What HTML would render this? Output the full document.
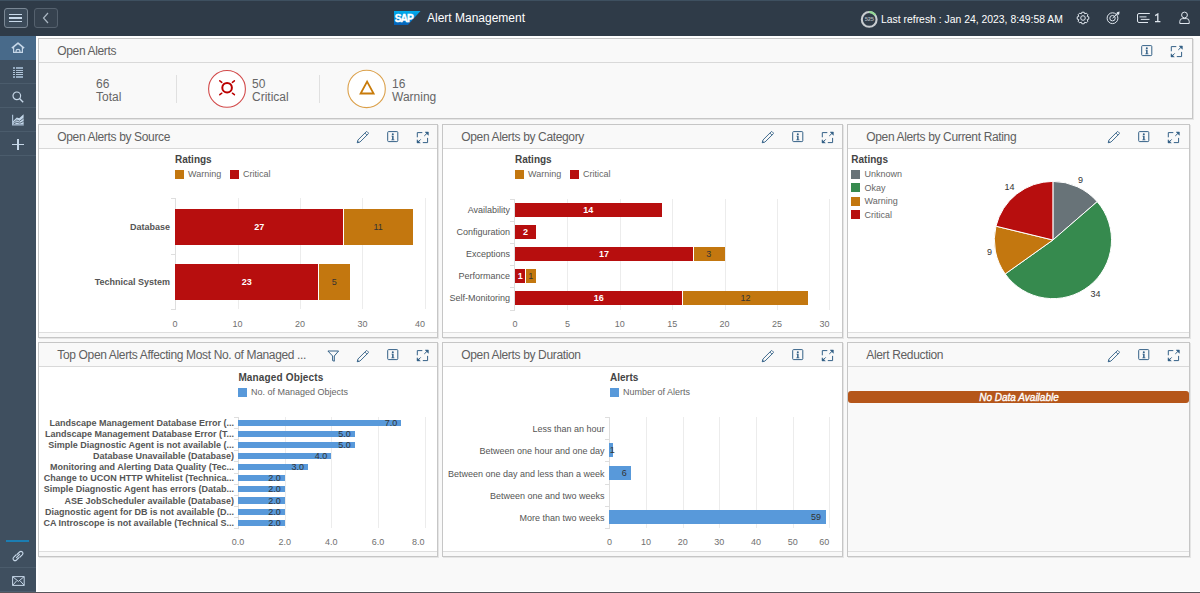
<!DOCTYPE html><html><head><meta charset="utf-8"><style>
*{box-sizing:border-box;margin:0;padding:0}
html,body{width:1200px;height:593px;overflow:hidden;background:#f9f9f9;font-family:"Liberation Sans",sans-serif;color:#333}
div,span,svg{position:absolute}
.t{white-space:nowrap;line-height:1}
.card{background:#fff;border:1px solid #c6c6c6;box-shadow:1px 1px 0 rgba(0,0,0,0.08)}
.ch{left:0;top:0;right:0;height:24px;background:#f9f9f9;border-bottom:1px solid #d9d9d9}
.tt{font-size:12px;letter-spacing:-0.35px;color:#606060}
.cf{left:0;right:0;bottom:0;height:5px;background:#f9f9f9;border-top:1px solid #dedede}
.s9{font-size:9px;color:#555}
.ax{font-size:9px;color:#707070}
.b{font-weight:700}
.grid{width:1px;background:#e9e9e9}
</style></head><body>
<div style="left:0;top:0;width:1200px;height:36px;background:#2f3b48;border-top:1px solid #3e5060"></div>
<div style="left:4px;top:8px;width:24px;height:20px;border:1px solid #7a8794;border-radius:3px;background:#3c4b5a"></div>
<div style="left:9.3px;top:13.6px;width:12.9px;height:1.4px;background:#c8d9ea;"></div>
<div style="left:9.3px;top:17.2px;width:12.9px;height:1.4px;background:#c8d9ea;"></div>
<div style="left:9.3px;top:21.1px;width:12.9px;height:1.4px;background:#c8d9ea;"></div>
<div style="left:34px;top:8px;width:24px;height:20px;border:1px solid #55616e;border-radius:3px;background:#36424f"></div>
<svg style="left:41px;top:12px" width="10" height="12" viewBox="0 0 10 12"><path d="M7 1 L2.5 6 L7 11" fill="none" stroke="#aab6c2" stroke-width="1.2"/></svg>
<svg style="left:394px;top:11px" width="27" height="14" viewBox="0 0 27 14"><defs><linearGradient id="g" x1="0" y1="0" x2="0" y2="1"><stop offset="0" stop-color="#00aeef"/><stop offset="1" stop-color="#0560b8"/></linearGradient></defs><path d="M0 0 H26.5 L13.9 14 H0 Z" fill="url(#g)"/><text x="0.7" y="11" font-family="Liberation Sans" font-weight="700" font-size="10.2" fill="#fff" stroke="#fff" stroke-width="0.45" letter-spacing="-0.9">SAP</text></svg>
<span class="t " style="left:427px;top:12px;font-size:12px;color:#fff">Alert Management</span>
<svg style="left:860px;top:10px" width="18" height="19" viewBox="0 0 18 19"><circle cx="9.2" cy="9.4" r="7.4" fill="none" stroke="#c8ccd0" stroke-width="2.1"/><path d="M9.2 2 A7.4 7.4 0 0 1 15.26 5.16" fill="none" stroke="#93d893" stroke-width="2.1"/><text x="9.2" y="11.4" text-anchor="middle" font-family="Liberation Sans" font-weight="700" font-size="5.6" fill="#aab0b6" letter-spacing="-0.2">525</text></svg>
<span class="t " style="left:881px;top:15px;font-size:10.4px;color:#fff">Last refresh : Jan 24, 2023, 8:49:58 AM</span>
<svg style="left:1076px;top:10.8px" width="14" height="14" viewBox="0 0 14 14"><path d="M11.16 5.29 L12.78 5.83 L12.78 8.17 L11.16 8.71 L11.15 8.73 L11.92 10.26 L10.26 11.92 L8.73 11.15 L8.71 11.16 L8.17 12.78 L5.83 12.78 L5.29 11.16 L5.27 11.15 L3.74 11.92 L2.08 10.26 L2.85 8.73 L2.84 8.71 L1.22 8.17 L1.22 5.83 L2.84 5.29 L2.85 5.27 L2.08 3.74 L3.74 2.08 L5.27 2.85 L5.29 2.84 L5.83 1.22 L8.17 1.22 L8.71 2.84 L8.73 2.85 L10.26 2.08 L11.92 3.74 L11.15 5.27 Z" fill="none" stroke="#dfe6ee" stroke-width="1" stroke-linejoin="round"/><circle cx="7" cy="7" r="2.3" fill="none" stroke="#dfe6ee" stroke-width="1"/></svg>
<svg style="left:1106px;top:11px" width="15" height="14" viewBox="0 0 15 14"><circle cx="6.5" cy="7.2" r="5.4" fill="none" stroke="#dfe6ee" stroke-width="1"/><circle cx="6.5" cy="7.2" r="2.7" fill="none" stroke="#dfe6ee" stroke-width="1"/><path d="M6.5 7.2 L12.6 1.6" stroke="#dfe6ee" stroke-width="1"/><path d="M11 1.2 L13.6 0.6 L13.2 3.2 L12 4 L10.4 2.6 Z" fill="#dfe6ee"/></svg>
<svg style="left:1136px;top:12px" width="15" height="12" viewBox="0 0 15 12"><path d="M13.8 1.5 H3 Q1.5 1.5 1.5 3 V9 Q1.5 10.5 3 10.5 H12" fill="none" stroke="#dfe6ee" stroke-width="1"/><path d="M3.5 4.9 H10.5 M4.8 7.4 H13.5" stroke="#dfe6ee" stroke-width="1"/></svg>
<svg style="left:1154px;top:13px" width="8" height="10" viewBox="0 0 8 10"><path d="M1.2 2.6 L3.8 1 V8.6 M1 8.6 H6.4" fill="none" stroke="#dfe6ee" stroke-width="1.3"/></svg>
<svg style="left:1179px;top:11px" width="11" height="14" viewBox="0 0 11 14"><circle cx="5.5" cy="4" r="2.9" fill="none" stroke="#dfe6ee" stroke-width="1"/><path d="M0.8 12.5 V10.3 Q0.8 7.6 3.5 7.6 H7.5 Q10.2 7.6 10.2 10.3 V12.5 Z" fill="none" stroke="#dfe6ee" stroke-width="1"/></svg>
<div style="left:0px;top:36px;width:36px;height:557px;background:#3f4f5f;"></div>
<div style="left:0px;top:36px;width:36px;height:24px;background:#486a8a;"></div>
<div style="left:36px;top:36px;width:1164px;height:2px;background:#fff;"></div>
<div style="left:36px;top:36px;width:2px;height:556px;background:#fff;"></div>
<div style="left:0px;top:83px;width:36px;height:1px;background:#4b5c6c;"></div>
<div style="left:0px;top:107px;width:36px;height:1px;background:#4b5c6c;"></div>
<div style="left:0px;top:131px;width:36px;height:1px;background:#4b5c6c;"></div>
<div style="left:0px;top:155px;width:36px;height:1px;background:#4b5c6c;"></div>
<svg style="left:11px;top:42px" width="14" height="12" viewBox="0 0 14 12"><path d="M0.9 6.2 L7 1.1 L13.1 6.2" fill="none" stroke="#c6d7e8" stroke-width="1.6" stroke-linejoin="round"/><path d="M2.6 5 V10.4 H11.4 V5 M5.1 10.4 V8.7 Q5.1 7.4 7 7.4 Q8.9 7.4 8.9 8.7 V10.4" fill="none" stroke="#c6d7e8" stroke-width="1.2"/></svg>
<div style="left:12.9px;top:67px;width:2.1px;height:1.5px;background:#93a9bf;"></div>
<div style="left:15.8px;top:67px;width:7px;height:1.5px;background:#93a9bf;"></div>
<div style="left:12.9px;top:69.6px;width:2.1px;height:1.3px;background:#a9bed3;"></div>
<div style="left:15.8px;top:69.6px;width:7px;height:1.3px;background:#a9bed3;"></div>
<div style="left:12.9px;top:71.9px;width:2.1px;height:1.3px;background:#b3c7db;"></div>
<div style="left:15.8px;top:71.9px;width:7px;height:1.3px;background:#b3c7db;"></div>
<div style="left:12.9px;top:74px;width:2.1px;height:1.3px;background:#b3c7db;"></div>
<div style="left:15.8px;top:74px;width:7px;height:1.3px;background:#b3c7db;"></div>
<div style="left:12.9px;top:76.1px;width:2.1px;height:1.6px;background:#93a9bf;"></div>
<div style="left:15.8px;top:76.1px;width:7px;height:1.6px;background:#93a9bf;"></div>
<svg style="left:12px;top:91px" width="12" height="12" viewBox="0 0 12 12"><circle cx="4.8" cy="4.8" r="3.8" fill="none" stroke="#c6d7e8" stroke-width="1.2"/><path d="M7.5 7.5 L11.2 11.2" stroke="#c6d7e8" stroke-width="1.4"/></svg>
<svg style="left:12px;top:114px" width="13" height="12" viewBox="0 0 13 12"><path d="M1 10.4 V7.2 L4.8 3.4 L7.2 4.2 L11.6 0.2 V10.4 Z" fill="#c3d7ea"/><path d="M1.6 8.6 L4.8 5.9 L7.6 7.2 L11.6 4.2 M1.6 10 L4.8 8.2 L8 9.2 L11.6 7.4" fill="none" stroke="#3f4f5f" stroke-width="0.8"/><path d="M0.6 0.8 V11 H11.8" fill="none" stroke="#a9bed3" stroke-width="1.2"/></svg>
<div style="left:12px;top:143.5px;width:12px;height:1.4px;background:#c6d7e8;"></div>
<div style="left:17.3px;top:138.5px;width:1.4px;height:11.5px;background:#c6d7e8;"></div>
<div style="left:6px;top:540.2px;width:23px;height:1.5px;background:#1b7db2;"></div>
<svg style="left:12px;top:550px" width="12" height="12" viewBox="0 0 12 12"><path d="M5 4.5 L7.5 2 Q9 0.6 10.4 2 Q11.6 3.3 10.2 4.8 L7.5 7.5 M7 7.5 L4.5 10 Q3 11.4 1.6 10 Q0.4 8.7 1.8 7.2 L4.5 4.5 M4.2 7.8 L7.8 4.2" fill="none" stroke="#c6d7e8" stroke-width="1.1"/></svg>
<div style="left:0px;top:567px;width:36px;height:1px;background:#4b5c6c;"></div>
<svg style="left:11.5px;top:576px" width="13" height="10" viewBox="0 0 13 10"><path d="M0.6 0.6 H12.2 V9.4 H0.6 Z M0.6 0.6 L6.4 5.4 L12.2 0.6 M0.6 9.4 L4.7 4.8 M12.2 9.4 L8.1 4.8" fill="none" stroke="#c6d7e8" stroke-width="1" stroke-linejoin="round"/></svg>
<div style="left:0px;top:591px;width:36px;height:1px;background:#4b5e70;"></div>
<div style="left:36px;top:591px;width:1164px;height:1px;background:#ffffff;"></div>
<div style="left:0px;top:592px;width:1200px;height:1px;background:#58545a;"></div>
<div class="card" style="left:38px;top:38px;width:1155px;height:81px;background:#f9f9f9">
<div class="ch"></div>
<span class="t tt" style="left:18.3px;top:5.6px;">Open Alerts</span>
<svg style="left:1102.3px;top:6.2px" width="12" height="12" viewBox="0 0 12 12"><rect x="0.7" y="0.6" width="10.1" height="10" rx="0.9" fill="none" stroke="#346187" stroke-width="1"/><circle cx="5.8" cy="3.2" r="1" fill="#346187"/><path d="M4.5 4.8 H6.6 V8.4 H7.4 V9.3 H4.3 V8.4 H5.1 V5.6 H4.5 Z" fill="#346187"/></svg>
<svg style="left:1130.5px;top:6.0px" width="14" height="14" viewBox="0 0 14 14"><path d="M1.3 6.3 V1.6 H6.3 M11.6 6.9 V11.6 H6.8 M8.3 4.9 L11.9 1.5 M4.7 8.4 L1.3 11.8" fill="none" stroke="#346187" stroke-width="1"/><path d="M9.2 1 H12.4 V4.3 Z M1 8.7 V11.9 H4.3 Z" fill="#346187" stroke="#346187" stroke-width="0.5" stroke-linejoin="round"/></svg>
</div>
<span class="t " style="left:96px;top:78px;font-size:12px;color:#666">66</span>
<span class="t " style="left:96px;top:91px;font-size:12px;color:#666">Total</span>
<div style="left:176px;top:75px;width:1px;height:28px;background:#e0e0e0;"></div>
<svg style="left:207px;top:69px" width="40" height="40" viewBox="0 0 40 40"><circle cx="20" cy="19.9" r="18.4" fill="#fff" stroke="#d24a4a" stroke-width="1.1"/><circle cx="20.1" cy="18.7" r="4.8" fill="none" stroke="#bb0000" stroke-width="2"/><path d="M12.8 11.8 L14.8 13.4 M27.4 11.8 L25.4 13.4 M12.8 25.7 L14.8 24.2 M27.4 25.7 L25.4 24.2" stroke="#bb0000" stroke-width="1.5" stroke-linecap="round"/></svg>
<span class="t " style="left:252px;top:78px;font-size:12px;color:#666">50</span>
<span class="t " style="left:252px;top:91px;font-size:12px;color:#666">Critical</span>
<div style="left:319px;top:75px;width:1px;height:28px;background:#e0e0e0;"></div>
<svg style="left:346px;top:69px" width="41" height="40" viewBox="0 0 41 40"><circle cx="20.6" cy="19.9" r="18.7" fill="#fff" stroke="#dba04a" stroke-width="1.1"/><path d="M21.1 12.6 L27.6 24.5 H14.6 Z" fill="none" stroke="#c87b0a" stroke-width="1.8" stroke-linejoin="miter"/></svg>
<span class="t " style="left:392px;top:78px;font-size:12px;color:#666">16</span>
<span class="t " style="left:392px;top:91px;font-size:12px;color:#666">Warning</span>
<div class="card" style="left:38px;top:124px;width:400px;height:214px;background:#fff">
<div class="ch"></div>
<span class="t tt" style="left:18.3px;top:5.6px;">Open Alerts by Source</span>
<svg style="left:316.7px;top:6.0px" width="13" height="13" viewBox="0 0 14 14"><path d="M1.3 12.7 L2.1 9.7 L11.1 0.7 Q11.5 0.4 11.9 0.7 L13.3 2.1 Q13.6 2.5 13.3 2.9 L4.3 11.9 Z" fill="none" stroke="#346187" stroke-width="1"/><path d="M9.6 2.2 L11.8 4.4" stroke="#346187" stroke-width="0.9"/><path d="M1.3 12.7 L1.8 10.6 L3.4 12.2 Z" fill="#346187"/></svg>
<svg style="left:347.8px;top:5.8px" width="12" height="12" viewBox="0 0 12 12"><rect x="0.7" y="0.6" width="10.1" height="10" rx="0.9" fill="none" stroke="#346187" stroke-width="1"/><circle cx="5.8" cy="3.2" r="1" fill="#346187"/><path d="M4.5 4.8 H6.6 V8.4 H7.4 V9.3 H4.3 V8.4 H5.1 V5.6 H4.5 Z" fill="#346187"/></svg>
<svg style="left:376.5px;top:5.6px" width="14" height="14" viewBox="0 0 14 14"><path d="M1.3 6.3 V1.6 H6.3 M11.6 6.9 V11.6 H6.8 M8.3 4.9 L11.9 1.5 M4.7 8.4 L1.3 11.8" fill="none" stroke="#346187" stroke-width="1"/><path d="M9.2 1 H12.4 V4.3 Z M1 8.7 V11.9 H4.3 Z" fill="#346187" stroke="#346187" stroke-width="0.5" stroke-linejoin="round"/></svg>
<div class="cf"></div>
</div>
<span class="t b" style="left:175px;top:154.5px;font-size:10px;color:#444">Ratings</span>
<div style="left:175px;top:170px;width:9px;height:9px;background:#c3770f;"></div>
<span class="t s9" style="left:188px;top:170px;color:#666">Warning</span>
<div style="left:230px;top:170px;width:9px;height:9px;background:#b70e0e;"></div>
<span class="t s9" style="left:243px;top:170px;color:#666">Critical</span>
<div style="left:238px;top:198px;width:1px;height:111px;background:#ececec;"></div>
<div style="left:300px;top:198px;width:1px;height:111px;background:#ececec;"></div>
<div style="left:362px;top:198px;width:1px;height:111px;background:#ececec;"></div>
<div style="left:425px;top:198px;width:1px;height:111px;background:#ececec;"></div>
<div style="left:175px;top:198px;width:1px;height:112px;background:#dedede;"></div>
<div style="left:171px;top:198px;width:4px;height:1px;background:#dedede;"></div>
<div style="left:171px;top:254px;width:4px;height:1px;background:#dedede;"></div>
<div style="left:171px;top:309px;width:4px;height:1px;background:#dedede;"></div>
<div style="left:175px;top:208.5px;width:168.75px;height:36px;background:#b70e0e;"></div>
<div style="left:343.75px;top:208.5px;width:68.75px;height:36px;background:#c3770f;"></div>
<div style="left:343.25px;top:208.5px;width:1px;height:36px;background:#fff;"></div>
<div style="left:175px;top:264.2px;width:143.75px;height:36px;background:#b70e0e;"></div>
<div style="left:318.75px;top:264.2px;width:31.25px;height:36px;background:#c3770f;"></div>
<div style="left:318.25px;top:264.2px;width:1px;height:36px;background:#fff;"></div>
<span class="t" style="left:209.375px;top:220.5px;width:100px;height:12px;text-align:center;line-height:12px;font-size:9px;font-weight:700;color:#fff">27</span>
<span class="t" style="left:328.125px;top:220.5px;width:100px;height:12px;text-align:center;line-height:12px;font-size:9px;color:#333">11</span>
<span class="t" style="left:196.875px;top:276.2px;width:100px;height:12px;text-align:center;line-height:12px;font-size:9px;font-weight:700;color:#fff">23</span>
<span class="t" style="left:284.375px;top:276.2px;width:100px;height:12px;text-align:center;line-height:12px;font-size:9px;color:#333">5</span>
<span class="t" style="left:-130px;top:220.5px;width:300px;height:12px;text-align:right;line-height:12px;font-size:9px;font-weight:700;color:#555">Database</span>
<span class="t" style="left:-130px;top:276.2px;width:300px;height:12px;text-align:right;line-height:12px;font-size:9px;font-weight:700;color:#555">Technical System</span>
<span class="t" style="left:125.0px;top:317.5px;width:100px;height:12px;text-align:center;line-height:12px;font-size:9px;color:#707070">0</span>
<span class="t" style="left:187.5px;top:317.5px;width:100px;height:12px;text-align:center;line-height:12px;font-size:9px;color:#707070">10</span>
<span class="t" style="left:250.0px;top:317.5px;width:100px;height:12px;text-align:center;line-height:12px;font-size:9px;color:#707070">20</span>
<span class="t" style="left:312.5px;top:317.5px;width:100px;height:12px;text-align:center;line-height:12px;font-size:9px;color:#707070">30</span>
<span class="t" style="left:125.0px;top:317.5px;width:300px;height:12px;text-align:right;line-height:12px;font-size:9px;color:#707070">40</span>
<div class="card" style="left:442px;top:124px;width:401px;height:214px;background:#fff">
<div class="ch"></div>
<span class="t tt" style="left:18.3px;top:5.6px;">Open Alerts by Category</span>
<svg style="left:317.7px;top:6.0px" width="13" height="13" viewBox="0 0 14 14"><path d="M1.3 12.7 L2.1 9.7 L11.1 0.7 Q11.5 0.4 11.9 0.7 L13.3 2.1 Q13.6 2.5 13.3 2.9 L4.3 11.9 Z" fill="none" stroke="#346187" stroke-width="1"/><path d="M9.6 2.2 L11.8 4.4" stroke="#346187" stroke-width="0.9"/><path d="M1.3 12.7 L1.8 10.6 L3.4 12.2 Z" fill="#346187"/></svg>
<svg style="left:348.8px;top:5.8px" width="12" height="12" viewBox="0 0 12 12"><rect x="0.7" y="0.6" width="10.1" height="10" rx="0.9" fill="none" stroke="#346187" stroke-width="1"/><circle cx="5.8" cy="3.2" r="1" fill="#346187"/><path d="M4.5 4.8 H6.6 V8.4 H7.4 V9.3 H4.3 V8.4 H5.1 V5.6 H4.5 Z" fill="#346187"/></svg>
<svg style="left:377.5px;top:5.6px" width="14" height="14" viewBox="0 0 14 14"><path d="M1.3 6.3 V1.6 H6.3 M11.6 6.9 V11.6 H6.8 M8.3 4.9 L11.9 1.5 M4.7 8.4 L1.3 11.8" fill="none" stroke="#346187" stroke-width="1"/><path d="M9.2 1 H12.4 V4.3 Z M1 8.7 V11.9 H4.3 Z" fill="#346187" stroke="#346187" stroke-width="0.5" stroke-linejoin="round"/></svg>
<div class="cf"></div>
</div>
<span class="t b" style="left:515px;top:154.5px;font-size:10px;color:#444">Ratings</span>
<div style="left:515px;top:170px;width:9px;height:9px;background:#c3770f;"></div>
<span class="t s9" style="left:528px;top:170px;color:#666">Warning</span>
<div style="left:570px;top:170px;width:9px;height:9px;background:#b70e0e;"></div>
<span class="t s9" style="left:583px;top:170px;color:#666">Critical</span>
<div style="left:567px;top:198.5px;width:1px;height:111.0px;background:#ececec;"></div>
<div style="left:620px;top:198.5px;width:1px;height:111.0px;background:#ececec;"></div>
<div style="left:672px;top:198.5px;width:1px;height:111.0px;background:#ececec;"></div>
<div style="left:725px;top:198.5px;width:1px;height:111.0px;background:#ececec;"></div>
<div style="left:777px;top:198.5px;width:1px;height:111.0px;background:#ececec;"></div>
<div style="left:829px;top:198.5px;width:1px;height:111.0px;background:#ececec;"></div>
<div style="left:514px;top:198.5px;width:1px;height:112.0px;background:#dedede;"></div>
<div style="left:510px;top:198.5px;width:4px;height:1px;background:#dedede;"></div>
<div style="left:510px;top:220.7px;width:4px;height:1px;background:#dedede;"></div>
<div style="left:510px;top:242.9px;width:4px;height:1px;background:#dedede;"></div>
<div style="left:510px;top:265.1px;width:4px;height:1px;background:#dedede;"></div>
<div style="left:510px;top:287.3px;width:4px;height:1px;background:#dedede;"></div>
<div style="left:510px;top:309.5px;width:4px;height:1px;background:#dedede;"></div>
<div style="left:515px;top:202.8px;width:146.72px;height:14px;background:#b70e0e;"></div>
<span class="t" style="left:538.36px;top:203.60000000000002px;width:100px;height:12px;text-align:center;line-height:12px;font-size:9px;font-weight:700;color:#fff">14</span>
<span class="t" style="left:210px;top:204.10000000000002px;width:300px;height:12px;text-align:right;line-height:12px;font-size:9px;color:#555">Availability</span>
<div style="left:515px;top:224.88px;width:20.96px;height:14px;background:#b70e0e;"></div>
<span class="t" style="left:475.48px;top:225.68px;width:100px;height:12px;text-align:center;line-height:12px;font-size:9px;font-weight:700;color:#fff">2</span>
<span class="t" style="left:210px;top:226.18px;width:300px;height:12px;text-align:right;line-height:12px;font-size:9px;color:#555">Configuration</span>
<div style="left:515px;top:246.96px;width:178.16px;height:14px;background:#b70e0e;"></div>
<div style="left:693.16px;top:246.96px;width:31.44px;height:14px;background:#c3770f;"></div>
<div style="left:692.66px;top:246.96px;width:1px;height:14px;background:#fff;"></div>
<span class="t" style="left:554.08px;top:247.76000000000002px;width:100px;height:12px;text-align:center;line-height:12px;font-size:9px;font-weight:700;color:#fff">17</span>
<span class="t" style="left:658.88px;top:247.76000000000002px;width:100px;height:12px;text-align:center;line-height:12px;font-size:9px;color:#333">3</span>
<span class="t" style="left:210px;top:248.26000000000002px;width:300px;height:12px;text-align:right;line-height:12px;font-size:9px;color:#555">Exceptions</span>
<div style="left:515px;top:269.04px;width:10.48px;height:14px;background:#b70e0e;"></div>
<div style="left:525.48px;top:269.04px;width:10.48px;height:14px;background:#c3770f;"></div>
<div style="left:524.98px;top:269.04px;width:1px;height:14px;background:#fff;"></div>
<span class="t" style="left:470.24px;top:269.84000000000003px;width:100px;height:12px;text-align:center;line-height:12px;font-size:9px;font-weight:700;color:#fff">1</span>
<span class="t" style="left:480.72px;top:269.84000000000003px;width:100px;height:12px;text-align:center;line-height:12px;font-size:9px;color:#333">1</span>
<span class="t" style="left:210px;top:270.34000000000003px;width:300px;height:12px;text-align:right;line-height:12px;font-size:9px;color:#555">Performance</span>
<div style="left:515px;top:291.12px;width:167.68px;height:14px;background:#b70e0e;"></div>
<div style="left:682.68px;top:291.12px;width:125.76px;height:14px;background:#c3770f;"></div>
<div style="left:682.18px;top:291.12px;width:1px;height:14px;background:#fff;"></div>
<span class="t" style="left:548.84px;top:291.92px;width:100px;height:12px;text-align:center;line-height:12px;font-size:9px;font-weight:700;color:#fff">16</span>
<span class="t" style="left:695.5600000000001px;top:291.92px;width:100px;height:12px;text-align:center;line-height:12px;font-size:9px;color:#333">12</span>
<span class="t" style="left:210px;top:292.42px;width:300px;height:12px;text-align:right;line-height:12px;font-size:9px;color:#555">Self-Monitoring</span>
<span class="t" style="left:465.0px;top:317.8px;width:100px;height:12px;text-align:center;line-height:12px;font-size:9px;color:#707070">0</span>
<span class="t" style="left:517.4px;top:317.8px;width:100px;height:12px;text-align:center;line-height:12px;font-size:9px;color:#707070">5</span>
<span class="t" style="left:569.8px;top:317.8px;width:100px;height:12px;text-align:center;line-height:12px;font-size:9px;color:#707070">10</span>
<span class="t" style="left:622.2px;top:317.8px;width:100px;height:12px;text-align:center;line-height:12px;font-size:9px;color:#707070">15</span>
<span class="t" style="left:674.6px;top:317.8px;width:100px;height:12px;text-align:center;line-height:12px;font-size:9px;color:#707070">20</span>
<span class="t" style="left:727.0px;top:317.8px;width:100px;height:12px;text-align:center;line-height:12px;font-size:9px;color:#707070">25</span>
<span class="t" style="left:529.4000000000001px;top:317.8px;width:300px;height:12px;text-align:right;line-height:12px;font-size:9px;color:#707070">30</span>
<div class="card" style="left:847px;top:124px;width:343px;height:214px;background:#fff">
<div class="ch"></div>
<span class="t tt" style="left:18.3px;top:5.6px;">Open Alerts by Current Rating</span>
<svg style="left:258.7px;top:6.0px" width="13" height="13" viewBox="0 0 14 14"><path d="M1.3 12.7 L2.1 9.7 L11.1 0.7 Q11.5 0.4 11.9 0.7 L13.3 2.1 Q13.6 2.5 13.3 2.9 L4.3 11.9 Z" fill="none" stroke="#346187" stroke-width="1"/><path d="M9.6 2.2 L11.8 4.4" stroke="#346187" stroke-width="0.9"/><path d="M1.3 12.7 L1.8 10.6 L3.4 12.2 Z" fill="#346187"/></svg>
<svg style="left:289.8px;top:5.8px" width="12" height="12" viewBox="0 0 12 12"><rect x="0.7" y="0.6" width="10.1" height="10" rx="0.9" fill="none" stroke="#346187" stroke-width="1"/><circle cx="5.8" cy="3.2" r="1" fill="#346187"/><path d="M4.5 4.8 H6.6 V8.4 H7.4 V9.3 H4.3 V8.4 H5.1 V5.6 H4.5 Z" fill="#346187"/></svg>
<svg style="left:318.5px;top:5.6px" width="14" height="14" viewBox="0 0 14 14"><path d="M1.3 6.3 V1.6 H6.3 M11.6 6.9 V11.6 H6.8 M8.3 4.9 L11.9 1.5 M4.7 8.4 L1.3 11.8" fill="none" stroke="#346187" stroke-width="1"/><path d="M9.2 1 H12.4 V4.3 Z M1 8.7 V11.9 H4.3 Z" fill="#346187" stroke="#346187" stroke-width="0.5" stroke-linejoin="round"/></svg>
<div class="cf"></div>
</div>
<span class="t b" style="left:851.3px;top:154.5px;font-size:10px;color:#444">Ratings</span>
<div style="left:851.2px;top:169.8px;width:9px;height:9px;background:#687378;"></div>
<span class="t s9" style="left:864.6px;top:170.0px;color:#666">Unknown</span>
<div style="left:851.2px;top:183.3px;width:9px;height:9px;background:#368a4e;"></div>
<span class="t s9" style="left:864.6px;top:183.5px;color:#666">Okay</span>
<div style="left:851.2px;top:196.8px;width:9px;height:9px;background:#c3770f;"></div>
<span class="t s9" style="left:864.6px;top:197.0px;color:#666">Warning</span>
<div style="left:851.2px;top:210.3px;width:9px;height:9px;background:#b70e0e;"></div>
<span class="t s9" style="left:864.6px;top:210.5px;color:#666">Critical</span>
<svg style="left:0;top:0" width="1200" height="593" viewBox="0 0 1200 593"><path d="M1052.9 240 L1052.90 181.40 A58.6 58.6 0 0 1 1097.19 201.63 Z" fill="#687378" stroke="#fff" stroke-width="1"/><path d="M1052.9 240 L1097.19 201.63 A58.6 58.6 0 1 1 1005.17 273.99 Z" fill="#368a4e" stroke="#fff" stroke-width="1"/><path d="M1052.9 240 L1005.17 273.99 A58.6 58.6 0 0 1 995.95 226.18 Z" fill="#c3770f" stroke="#fff" stroke-width="1"/><path d="M1052.9 240 L995.95 226.18 A58.6 58.6 0 0 1 1052.90 181.40 Z" fill="#b70e0e" stroke="#fff" stroke-width="1"/></svg>
<span class="t" style="left:1030.5px;top:173.5px;width:100px;height:12px;text-align:center;line-height:12px;font-size:9px;color:#333">9</span>
<span class="t" style="left:1045.5px;top:287.5px;width:100px;height:12px;text-align:center;line-height:12px;font-size:9px;color:#333">34</span>
<span class="t" style="left:939.5px;top:245.5px;width:100px;height:12px;text-align:center;line-height:12px;font-size:9px;color:#333">9</span>
<span class="t" style="left:959.5px;top:181px;width:100px;height:12px;text-align:center;line-height:12px;font-size:9px;color:#333">14</span>
<div class="card" style="left:38px;top:342px;width:400px;height:215px;background:#fff">
<div class="ch"></div>
<span class="t tt" style="left:18.3px;top:5.6px;">Top Open Alerts Affecting Most No. of Managed ...</span>
<svg style="left:287.6px;top:6.5px" width="13" height="13" viewBox="0 0 13 13"><path d="M0.9 1 H11.6 L7.3 6 V11.2 L5.6 10.6 V6 Z" fill="none" stroke="#346187" stroke-width="1" stroke-linejoin="round"/></svg>
<svg style="left:316.7px;top:6.6px" width="13" height="13" viewBox="0 0 14 14"><path d="M1.3 12.7 L2.1 9.7 L11.1 0.7 Q11.5 0.4 11.9 0.7 L13.3 2.1 Q13.6 2.5 13.3 2.9 L4.3 11.9 Z" fill="none" stroke="#346187" stroke-width="1"/><path d="M9.6 2.2 L11.8 4.4" stroke="#346187" stroke-width="0.9"/><path d="M1.3 12.7 L1.8 10.6 L3.4 12.2 Z" fill="#346187"/></svg>
<svg style="left:347.8px;top:6.3999999999999995px" width="12" height="12" viewBox="0 0 12 12"><rect x="0.7" y="0.6" width="10.1" height="10" rx="0.9" fill="none" stroke="#346187" stroke-width="1"/><circle cx="5.8" cy="3.2" r="1" fill="#346187"/><path d="M4.5 4.8 H6.6 V8.4 H7.4 V9.3 H4.3 V8.4 H5.1 V5.6 H4.5 Z" fill="#346187"/></svg>
<svg style="left:376.5px;top:6.199999999999999px" width="14" height="14" viewBox="0 0 14 14"><path d="M1.3 6.3 V1.6 H6.3 M11.6 6.9 V11.6 H6.8 M8.3 4.9 L11.9 1.5 M4.7 8.4 L1.3 11.8" fill="none" stroke="#346187" stroke-width="1"/><path d="M9.2 1 H12.4 V4.3 Z M1 8.7 V11.9 H4.3 Z" fill="#346187" stroke="#346187" stroke-width="0.5" stroke-linejoin="round"/></svg>
<div class="cf"></div>
</div>
<span class="t b" style="left:238.4px;top:373px;font-size:10px;letter-spacing:0.15px;color:#444">Managed Objects</span>
<div style="left:238px;top:388px;width:9px;height:9px;background:#5899da;"></div>
<span class="t s9" style="left:251px;top:388px;color:#666">No. of Managed Objects</span>
<div style="left:285px;top:417px;width:1px;height:111px;background:#ececec;"></div>
<div style="left:331px;top:417px;width:1px;height:111px;background:#ececec;"></div>
<div style="left:378px;top:417px;width:1px;height:111px;background:#ececec;"></div>
<div style="left:425px;top:417px;width:1px;height:111px;background:#ececec;"></div>
<div style="left:238px;top:417px;width:1px;height:112px;background:#dedede;"></div>
<div style="left:234px;top:417.0px;width:4px;height:1px;background:#dedede;"></div>
<div style="left:234px;top:428.1px;width:4px;height:1px;background:#dedede;"></div>
<div style="left:234px;top:439.2px;width:4px;height:1px;background:#dedede;"></div>
<div style="left:234px;top:450.3px;width:4px;height:1px;background:#dedede;"></div>
<div style="left:234px;top:461.4px;width:4px;height:1px;background:#dedede;"></div>
<div style="left:234px;top:472.5px;width:4px;height:1px;background:#dedede;"></div>
<div style="left:234px;top:483.6px;width:4px;height:1px;background:#dedede;"></div>
<div style="left:234px;top:494.7px;width:4px;height:1px;background:#dedede;"></div>
<div style="left:234px;top:505.8px;width:4px;height:1px;background:#dedede;"></div>
<div style="left:234px;top:516.9px;width:4px;height:1px;background:#dedede;"></div>
<div style="left:234px;top:528.0px;width:4px;height:1px;background:#dedede;"></div>
<div style="left:238px;top:419.7px;width:163.31px;height:6.2px;background:#5899da;"></div>
<span class="t" style="left:297.31px;top:416.8px;width:100px;height:12px;text-align:right;line-height:12px;font-size:9px;color:#333">7.0</span>
<span class="t" style="left:-66px;top:416.8px;width:300px;height:12px;text-align:right;line-height:12px;font-size:9px;font-weight:700;color:#555">Landscape Management Database Error (...</span>
<div style="left:238px;top:430.8px;width:116.64999999999999px;height:6.2px;background:#5899da;"></div>
<span class="t" style="left:250.64999999999998px;top:427.90000000000003px;width:100px;height:12px;text-align:right;line-height:12px;font-size:9px;color:#333">5.0</span>
<span class="t" style="left:-66px;top:427.90000000000003px;width:300px;height:12px;text-align:right;line-height:12px;font-size:9px;font-weight:700;color:#555">Landscape Management Database Error (T...</span>
<div style="left:238px;top:441.9px;width:116.64999999999999px;height:6.2px;background:#5899da;"></div>
<span class="t" style="left:250.64999999999998px;top:439.0px;width:100px;height:12px;text-align:right;line-height:12px;font-size:9px;color:#333">5.0</span>
<span class="t" style="left:-66px;top:439.0px;width:300px;height:12px;text-align:right;line-height:12px;font-size:9px;font-weight:700;color:#555">Simple Diagnostic Agent is not available (...</span>
<div style="left:238px;top:453.0px;width:93.32px;height:6.2px;background:#5899da;"></div>
<span class="t" style="left:227.32px;top:450.1px;width:100px;height:12px;text-align:right;line-height:12px;font-size:9px;color:#333">4.0</span>
<span class="t" style="left:-66px;top:450.1px;width:300px;height:12px;text-align:right;line-height:12px;font-size:9px;font-weight:700;color:#555">Database Unavailable (Database)</span>
<div style="left:238px;top:464.09999999999997px;width:69.99px;height:6.2px;background:#5899da;"></div>
<span class="t" style="left:203.99px;top:461.2px;width:100px;height:12px;text-align:right;line-height:12px;font-size:9px;color:#333">3.0</span>
<span class="t" style="left:-66px;top:461.2px;width:300px;height:12px;text-align:right;line-height:12px;font-size:9px;font-weight:700;color:#555">Monitoring and Alerting Data Quality (Tec...</span>
<div style="left:238px;top:475.2px;width:46.66px;height:6.2px;background:#5899da;"></div>
<span class="t" style="left:180.65999999999997px;top:472.3px;width:100px;height:12px;text-align:right;line-height:12px;font-size:9px;color:#333">2.0</span>
<span class="t" style="left:-66px;top:472.3px;width:300px;height:12px;text-align:right;line-height:12px;font-size:9px;font-weight:700;color:#555">Change to UCON HTTP Whitelist (Technica...</span>
<div style="left:238px;top:486.29999999999995px;width:46.66px;height:6.2px;background:#5899da;"></div>
<span class="t" style="left:180.65999999999997px;top:483.4px;width:100px;height:12px;text-align:right;line-height:12px;font-size:9px;color:#333">2.0</span>
<span class="t" style="left:-66px;top:483.4px;width:300px;height:12px;text-align:right;line-height:12px;font-size:9px;font-weight:700;color:#555">Simple Diagnostic Agent has errors (Datab...</span>
<div style="left:238px;top:497.4px;width:46.66px;height:6.2px;background:#5899da;"></div>
<span class="t" style="left:180.65999999999997px;top:494.5px;width:100px;height:12px;text-align:right;line-height:12px;font-size:9px;color:#333">2.0</span>
<span class="t" style="left:-66px;top:494.5px;width:300px;height:12px;text-align:right;line-height:12px;font-size:9px;font-weight:700;color:#555">ASE JobScheduler available (Database)</span>
<div style="left:238px;top:508.5px;width:46.66px;height:6.2px;background:#5899da;"></div>
<span class="t" style="left:180.65999999999997px;top:505.6px;width:100px;height:12px;text-align:right;line-height:12px;font-size:9px;color:#333">2.0</span>
<span class="t" style="left:-66px;top:505.6px;width:300px;height:12px;text-align:right;line-height:12px;font-size:9px;font-weight:700;color:#555">Diagnostic agent for DB is not available (D...</span>
<div style="left:238px;top:519.6px;width:46.66px;height:6.2px;background:#5899da;"></div>
<span class="t" style="left:180.65999999999997px;top:516.7px;width:100px;height:12px;text-align:right;line-height:12px;font-size:9px;color:#333">2.0</span>
<span class="t" style="left:-66px;top:516.7px;width:300px;height:12px;text-align:right;line-height:12px;font-size:9px;font-weight:700;color:#555">CA Introscope is not available (Technical S...</span>
<span class="t" style="left:188.0px;top:535.7px;width:100px;height:12px;text-align:center;line-height:12px;font-size:9px;color:#707070">0.0</span>
<span class="t" style="left:234.65999999999997px;top:535.7px;width:100px;height:12px;text-align:center;line-height:12px;font-size:9px;color:#707070">2.0</span>
<span class="t" style="left:281.32px;top:535.7px;width:100px;height:12px;text-align:center;line-height:12px;font-size:9px;color:#707070">4.0</span>
<span class="t" style="left:327.98px;top:535.7px;width:100px;height:12px;text-align:center;line-height:12px;font-size:9px;color:#707070">6.0</span>
<span class="t" style="left:124.63999999999999px;top:535.7px;width:300px;height:12px;text-align:right;line-height:12px;font-size:9px;color:#707070">8.0</span>
<div class="card" style="left:442px;top:342px;width:401px;height:215px;background:#fff">
<div class="ch"></div>
<span class="t tt" style="left:18.3px;top:5.6px;">Open Alerts by Duration</span>
<svg style="left:317.7px;top:6.6px" width="13" height="13" viewBox="0 0 14 14"><path d="M1.3 12.7 L2.1 9.7 L11.1 0.7 Q11.5 0.4 11.9 0.7 L13.3 2.1 Q13.6 2.5 13.3 2.9 L4.3 11.9 Z" fill="none" stroke="#346187" stroke-width="1"/><path d="M9.6 2.2 L11.8 4.4" stroke="#346187" stroke-width="0.9"/><path d="M1.3 12.7 L1.8 10.6 L3.4 12.2 Z" fill="#346187"/></svg>
<svg style="left:348.8px;top:6.3999999999999995px" width="12" height="12" viewBox="0 0 12 12"><rect x="0.7" y="0.6" width="10.1" height="10" rx="0.9" fill="none" stroke="#346187" stroke-width="1"/><circle cx="5.8" cy="3.2" r="1" fill="#346187"/><path d="M4.5 4.8 H6.6 V8.4 H7.4 V9.3 H4.3 V8.4 H5.1 V5.6 H4.5 Z" fill="#346187"/></svg>
<svg style="left:377.5px;top:6.199999999999999px" width="14" height="14" viewBox="0 0 14 14"><path d="M1.3 6.3 V1.6 H6.3 M11.6 6.9 V11.6 H6.8 M8.3 4.9 L11.9 1.5 M4.7 8.4 L1.3 11.8" fill="none" stroke="#346187" stroke-width="1"/><path d="M9.2 1 H12.4 V4.3 Z M1 8.7 V11.9 H4.3 Z" fill="#346187" stroke="#346187" stroke-width="0.5" stroke-linejoin="round"/></svg>
<div class="cf"></div>
</div>
<span class="t b" style="left:610px;top:373px;font-size:10px;color:#444">Alerts</span>
<div style="left:610px;top:388px;width:9px;height:9px;background:#5899da;"></div>
<span class="t s9" style="left:623px;top:388px;color:#666">Number of Alerts</span>
<div style="left:646px;top:417px;width:1px;height:111px;background:#ececec;"></div>
<div style="left:683px;top:417px;width:1px;height:111px;background:#ececec;"></div>
<div style="left:719px;top:417px;width:1px;height:111px;background:#ececec;"></div>
<div style="left:756px;top:417px;width:1px;height:111px;background:#ececec;"></div>
<div style="left:793px;top:417px;width:1px;height:111px;background:#ececec;"></div>
<div style="left:829px;top:417px;width:1px;height:111px;background:#ececec;"></div>
<div style="left:609px;top:417px;width:1px;height:112px;background:#dedede;"></div>
<div style="left:605px;top:417.0px;width:4px;height:1px;background:#dedede;"></div>
<div style="left:605px;top:439.2px;width:4px;height:1px;background:#dedede;"></div>
<div style="left:605px;top:461.4px;width:4px;height:1px;background:#dedede;"></div>
<div style="left:605px;top:483.6px;width:4px;height:1px;background:#dedede;"></div>
<div style="left:605px;top:505.8px;width:4px;height:1px;background:#dedede;"></div>
<div style="left:605px;top:528.0px;width:4px;height:1px;background:#dedede;"></div>
<span class="t" style="left:304.5px;top:423.09999999999997px;width:300px;height:12px;text-align:right;line-height:12px;font-size:9px;color:#555">Less than an hour</span>
<div style="left:609.4px;top:443.45px;width:3.665px;height:14px;background:#5899da;"></div>
<span class="t" style="left:562.2px;top:444.45px;width:100px;height:12px;text-align:center;line-height:12px;font-size:9px;color:#333">1</span>
<span class="t" style="left:304.5px;top:445.34999999999997px;width:300px;height:12px;text-align:right;line-height:12px;font-size:9px;color:#555">Between one hour and one day</span>
<div style="left:609.4px;top:465.7px;width:21.990000000000002px;height:14px;background:#5899da;"></div>
<span class="t" style="left:526.89px;top:466.7px;width:100px;height:12px;text-align:right;line-height:12px;font-size:9px;color:#333">6</span>
<span class="t" style="left:304.5px;top:467.59999999999997px;width:300px;height:12px;text-align:right;line-height:12px;font-size:9px;color:#555">Between one day and less than a week</span>
<span class="t" style="left:304.5px;top:489.84999999999997px;width:300px;height:12px;text-align:right;line-height:12px;font-size:9px;color:#555">Between one and two weeks</span>
<div style="left:609.4px;top:510.2px;width:216.235px;height:14px;background:#5899da;"></div>
<span class="t" style="left:721.135px;top:511.20000000000005px;width:100px;height:12px;text-align:right;line-height:12px;font-size:9px;color:#333">59</span>
<span class="t" style="left:304.5px;top:512.1px;width:300px;height:12px;text-align:right;line-height:12px;font-size:9px;color:#555">More than two weeks</span>
<span class="t" style="left:559.4px;top:536px;width:100px;height:12px;text-align:center;line-height:12px;font-size:9px;color:#707070">0</span>
<span class="t" style="left:596.05px;top:536px;width:100px;height:12px;text-align:center;line-height:12px;font-size:9px;color:#707070">10</span>
<span class="t" style="left:632.6999999999999px;top:536px;width:100px;height:12px;text-align:center;line-height:12px;font-size:9px;color:#707070">20</span>
<span class="t" style="left:669.35px;top:536px;width:100px;height:12px;text-align:center;line-height:12px;font-size:9px;color:#707070">30</span>
<span class="t" style="left:706.0px;top:536px;width:100px;height:12px;text-align:center;line-height:12px;font-size:9px;color:#707070">40</span>
<span class="t" style="left:742.65px;top:536px;width:100px;height:12px;text-align:center;line-height:12px;font-size:9px;color:#707070">50</span>
<span class="t" style="left:529.3px;top:536px;width:300px;height:12px;text-align:right;line-height:12px;font-size:9px;color:#707070">60</span>
<div class="card" style="left:847px;top:342px;width:343px;height:215px;background:#f9f9f9">
<div class="ch"></div>
<span class="t tt" style="left:18.3px;top:5.6px;">Alert Reduction</span>
<svg style="left:258.7px;top:6.6px" width="13" height="13" viewBox="0 0 14 14"><path d="M1.3 12.7 L2.1 9.7 L11.1 0.7 Q11.5 0.4 11.9 0.7 L13.3 2.1 Q13.6 2.5 13.3 2.9 L4.3 11.9 Z" fill="none" stroke="#346187" stroke-width="1"/><path d="M9.6 2.2 L11.8 4.4" stroke="#346187" stroke-width="0.9"/><path d="M1.3 12.7 L1.8 10.6 L3.4 12.2 Z" fill="#346187"/></svg>
<svg style="left:289.8px;top:6.3999999999999995px" width="12" height="12" viewBox="0 0 12 12"><rect x="0.7" y="0.6" width="10.1" height="10" rx="0.9" fill="none" stroke="#346187" stroke-width="1"/><circle cx="5.8" cy="3.2" r="1" fill="#346187"/><path d="M4.5 4.8 H6.6 V8.4 H7.4 V9.3 H4.3 V8.4 H5.1 V5.6 H4.5 Z" fill="#346187"/></svg>
<svg style="left:318.5px;top:6.199999999999999px" width="14" height="14" viewBox="0 0 14 14"><path d="M1.3 6.3 V1.6 H6.3 M11.6 6.9 V11.6 H6.8 M8.3 4.9 L11.9 1.5 M4.7 8.4 L1.3 11.8" fill="none" stroke="#346187" stroke-width="1"/><path d="M9.2 1 H12.4 V4.3 Z M1 8.7 V11.9 H4.3 Z" fill="#346187" stroke="#346187" stroke-width="0.5" stroke-linejoin="round"/></svg>
<div class="cf"></div>
</div>
<div style="left:848px;top:391px;width:341px;height:12px;background:#b5561a;border-radius:3px"></div>
<span class="t" style="left:969px;top:391.8px;width:100px;height:12px;text-align:center;line-height:12px;font-size:10px;font-style:italic;color:#fff;-webkit-text-stroke:0.35px #fff">No Data Available</span>
</body></html>
